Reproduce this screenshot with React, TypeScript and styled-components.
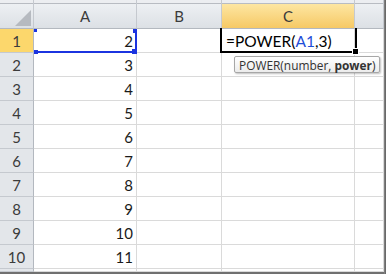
import styled, { createGlobalStyle } from "styled-components";

const GlobalStyle = createGlobalStyle`
  html, body {
    margin: 0;
    padding: 0;
    background: #707070;
    overflow: hidden;
  }
`;

const Frame = styled.div`
  width: 386px;
  height: 274px;
  background: linear-gradient(to right, transparent 384px, #8a8a8a 384px, #5e5e5e 386px);
`;

const Sheet = styled.div`
  position: relative;
  width: 384px;
  height: 272px;
  background: #fff;
  display: grid;
  grid-template-columns: 34px 103px 85px 133px 29px;
  grid-template-rows: 29px repeat(10, 24px) 3px;
  overflow: hidden;
  font-family: Lato, "Liberation Sans", sans-serif;
  font-size: 15px;
  color: #1a1a1a;
`;

const HeaderCell = styled.div<{ $selected?: boolean }>`
  box-sizing: border-box;
  padding-top: 4px;
  display: flex;
  align-items: center;
  justify-content: center;
  border-right: 1px solid #c5c9cf;
  border-bottom: 1px solid #b3b8bf;
  color: #3b3b3b;
  background: ${({ $selected }) =>
    $selected
      ? "linear-gradient(to bottom, #eceef1 0 3px, #b8bcc2 3px 4px, #fde6a2 4px, #f6c965 100%)"
      : "linear-gradient(to bottom, #eceef1 0 3px, #b8bcc2 3px 4px, #edf0f3 4px, #dce0e5 100%)"};
`;

const Corner = styled(HeaderCell)`
  position: relative;
  &::after {
    content: "";
    position: absolute;
    right: 2px;
    bottom: 2px;
    width: 0;
    height: 0;
    border-left: 16px solid transparent;
    border-bottom: 16px solid #b6bac0;
  }
`;

const RowHead = styled.div<{ $selected?: boolean }>`
  box-sizing: border-box;
  display: flex;
  align-items: center;
  justify-content: center;
  border-right: 1px solid #b3b8bf;
  border-bottom: 1px solid #c5c9cf;
  color: #3b3b3b;
  background: ${({ $selected }) => ($selected ? "#fcd76c" : "#e3e6ea")};
`;

const Cell = styled.div<{ $num?: boolean }>`
  position: relative;
  box-sizing: border-box;
  display: flex;
  align-items: center;
  justify-content: ${({ $num }) => ($num ? "flex-end" : "flex-start")};
  padding: 0 3px 0 4px;
  border-right: 1px solid #dadada;
  border-bottom: 1px solid #dadada;
  white-space: nowrap;
`;

const RefBox = styled.div`
  position: absolute;
  left: 34px;
  top: 29px;
  width: 101px;
  height: 22px;
  border-right: 2px solid #1b34e0;
  border-bottom: 2px solid #1b34e0;
  pointer-events: none;
`;

const Handle = styled.div<{ $x: number; $y: number; $s: number }>`
  position: absolute;
  left: ${({ $x }) => $x}px;
  top: ${({ $y }) => $y}px;
  width: ${({ $s }) => $s}px;
  height: ${({ $s }) => $s}px;
  background: #1b34e0;
`;

const ActiveBox = styled.div`
  position: absolute;
  left: 220px;
  top: 28px;
  width: 133px;
  height: 23px;
  border-left: 2px solid #000;
  border-right: 2px solid #000;
  border-bottom: 2px solid #000;
  pointer-events: none;
  &::after {
    content: "";
    position: absolute;
    right: -4px;
    bottom: -4px;
    width: 5px;
    height: 5px;
    background: #000;
    border: 1px solid #fff;
  }
`;

const Formula = styled.span`
  color: #000;
  font-size: 15.5px;
`;

const Ref = styled.span`
  color: #1f4ed8;
`;

const Tooltip = styled.div`
  position: absolute;
  left: 234px;
  top: 56px;
  height: 17px;
  box-sizing: border-box;
  padding: 0 4px;
  display: flex;
  align-items: center;
  border: 1px solid #a7a7a7;
  border-radius: 2px;
  background: linear-gradient(to bottom, #ffffff, #ececec);
  box-shadow: 1px 1px 2px rgba(0, 0, 0, 0.25);
  font-family: "Open Sans", "Liberation Sans", sans-serif;
  font-size: 11.9px;
  color: #333;
  white-space: nowrap;
  b {
    font-weight: 700;
  }
`;

const values = [2, 3, 4, 5, 6, 7, 8, 9, 10, 11];

export default function App() {
  return (
    <>
      <GlobalStyle />
      <Frame>
        <Sheet>
          <Corner />
          <HeaderCell>A</HeaderCell>
          <HeaderCell>B</HeaderCell>
          <HeaderCell $selected>C</HeaderCell>
          <HeaderCell />
          {values.map((v, i) => (
            <Row key={i} index={i + 1} value={v} />
          ))}
          <RowHead />
          <Cell />
          <Cell />
          <Cell />
          <Cell />

          <RefBox />
          <Handle $x={34} $y={29} $s={3} />
          <Handle $x={133} $y={29} $s={4} />
          <Handle $x={34} $y={50} $s={4} />
          <Handle $x={132} $y={49} $s={5} />
          <ActiveBox />
          <Tooltip>
            POWER(number,&nbsp;<b>power</b>)
          </Tooltip>
        </Sheet>
      </Frame>
    </>
  );
}

function Row({ index, value }: { index: number; value: number }) {
  const first = index === 1;
  return (
    <>
      <RowHead $selected={first}>{index}</RowHead>
      <Cell $num>{value}</Cell>
      <Cell />
      <Cell>
        {first && (
          <Formula>
            =POWER(<Ref>A1</Ref>,3)
          </Formula>
        )}
      </Cell>
      <Cell />
    </>
  );
}
